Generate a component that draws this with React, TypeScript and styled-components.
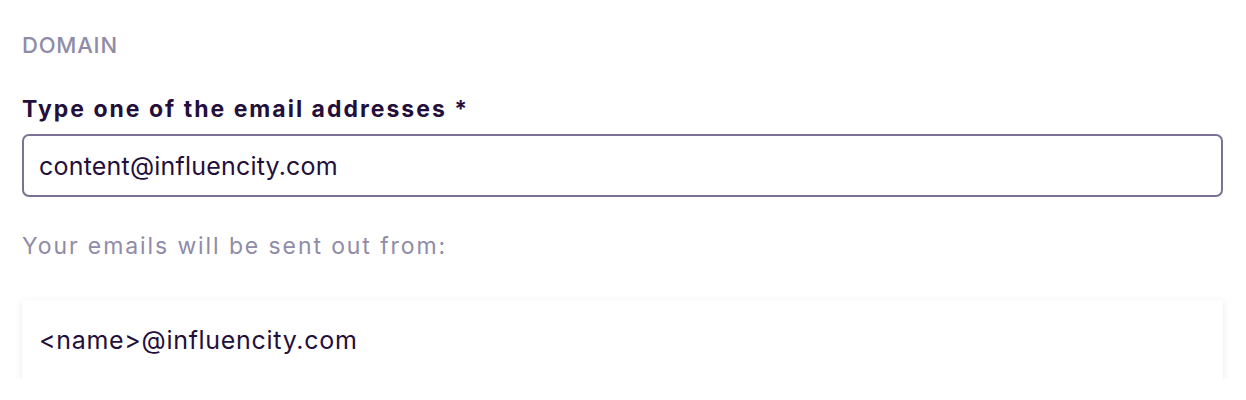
import React, { FC } from 'react';
import styled, { createGlobalStyle } from 'styled-components';

const GlobalStyle = createGlobalStyle`
  body {
    margin: 0;
    background: #ffffff;
    font-family: Inter, 'Noto Sans', sans-serif;
  }
`;

const Page = styled.div`
  display: flex;
  flex-direction: column;
  padding: 31px 23px 0 22px;
`;

const SectionTitle = styled.div`
  font-size: 22px;
  font-weight: 500;
  color: #908ba7;
  letter-spacing: 0.8px;
  line-height: 28px;
  margin-bottom: 36px;
`;

const FieldLabel = styled.label`
  font-size: 23px;
  font-weight: 700;
  color: #240f3b;
  letter-spacing: 2px;
  line-height: 28px;
  margin-bottom: 11px;
`;

const TextInput = styled.input`
  box-sizing: border-box;
  height: 63px;
  width: 100%;
  padding: 0 15px;
  border: 2px solid #7a7193;
  border-radius: 7px;
  font-family: inherit;
  font-size: 25px;
  letter-spacing: 0.2px;
  color: #240f3b;
  outline: none;
  margin: 0 0 35px;
`;

const Hint = styled.div`
  font-size: 23px;
  color: #908ba7;
  letter-spacing: 1.9px;
  line-height: 28px;
  margin-bottom: 40px;
`;

const Preview = styled.div`
  box-sizing: border-box;
  height: 79px;
  display: flex;
  align-items: center;
  padding: 0 17px;
  background: #ffffff;
  box-shadow: 0 2px 6px rgba(60, 40, 90, 0.12);
  font-size: 25px;
  letter-spacing: 0.7px;
  color: #240f3b;
`;

const App: FC = () => {
  return (
    <>
      <GlobalStyle />
      <Page>
        <SectionTitle>DOMAIN</SectionTitle>
        <FieldLabel>Type one of the email addresses *</FieldLabel>
        <TextInput defaultValue="content@influencity.com" />
        <Hint>Your emails will be sent out from:</Hint>
        <Preview>&lt;name&gt;@influencity.com</Preview>
      </Page>
    </>
  );
};

export default App;
